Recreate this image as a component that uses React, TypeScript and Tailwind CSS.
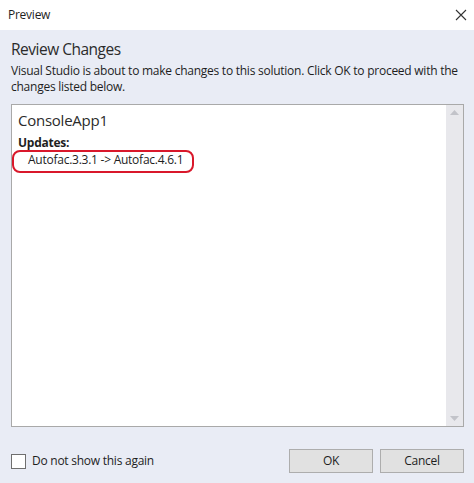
import React from 'react';

const App: React.FC = () => {
  return (
    <div className="w-[474px] h-[483px] flex flex-col bg-[#e9ecf5] text-[#1e1e1e] font-['Open_Sans',sans-serif] tracking-[-0.25px] overflow-hidden">
      {/* Title bar */}
      <div className="h-[30px] bg-white flex items-center justify-between pl-[8px] pr-[6px] shrink-0">
        <span className="text-[12px]">Preview</span>
        <svg width="14" height="14" viewBox="0 0 14 14" className="text-[#333]">
          <path d="M2 2 L12 12 M12 2 L2 12" stroke="currentColor" strokeWidth="1.1" />
        </svg>
      </div>

      <div className="flex-1 flex flex-col pl-[11px] pr-[10px] pt-[8px] pb-[10px]">
        <h1 className="text-[15.5px] leading-[22px] text-[#2b2b2b] tracking-[-0.5px]">Review Changes</h1>
        <p className="text-[12px] leading-[16px] mt-[3px]">
          Visual Studio is about to make changes to this solution. Click OK to proceed with the changes listed below.
        </p>

        {/* Changes box */}
        <div className="mt-[9px] h-[323px] border border-[#a9a9a9] bg-white flex">
          <div className="flex-1 relative pl-[6px] pt-[5px]">
            <div className="text-[15px] leading-[20px] text-[#2b2b2b]">ConsoleApp1</div>
            <div className="text-[12px] leading-[16px] font-bold mt-[5px]">Updates:</div>
            <div className="text-[12px] leading-[16px] pl-[10px] mt-[1px]">Autofac.3.3.1 -&gt; Autofac.4.6.1</div>
            <div className="absolute left-[0px] top-[45px] w-[182px] h-[23px] border-2 border-[#d9182b] rounded-[8px]" />
          </div>
          <div className="w-[17px] bg-[#e8e8ec] flex flex-col justify-between items-center py-[5px]">
            <svg width="9" height="5" viewBox="0 0 9 5"><path d="M0 5 L4.5 0 L9 5 Z" fill="#c2c3c9" /></svg>
            <svg width="9" height="5" viewBox="0 0 9 5"><path d="M0 0 L4.5 5 L9 0 Z" fill="#c2c3c9" /></svg>
          </div>
        </div>

        {/* Footer */}
        <div className="mt-auto flex items-center justify-between">
          <label className="flex items-center gap-[6px] text-[12px]">
            <span className="w-[15px] h-[15px] border border-[#6f6f6f] bg-white" />
            Do not show this again
          </label>
          <div className="flex gap-[7px]">
            <button className="w-[84px] h-[24px] border border-[#adadad] bg-[#e1e1e1] text-[12px]">OK</button>
            <button className="w-[84px] h-[24px] border border-[#adadad] bg-[#e1e1e1] text-[12px]">Cancel</button>
          </div>
        </div>
      </div>
    </div>
  );
};

export default App;
